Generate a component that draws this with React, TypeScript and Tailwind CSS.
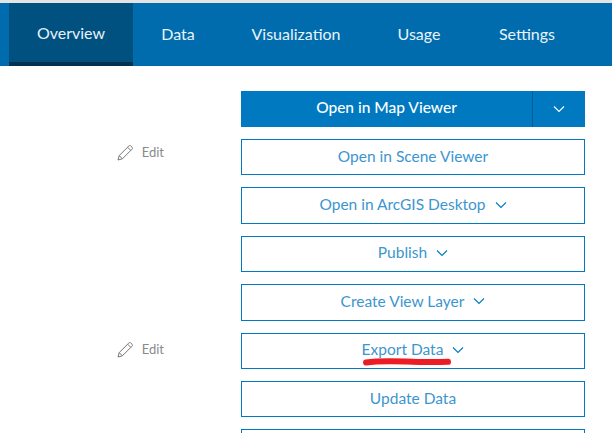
type Row = {
  label: string;
  chevron?: boolean;
  edit?: string;
};

const tabs = [
  { label: "Data", width: "w-[90px]" },
  { label: "Visualization", width: "w-[146px]" },
  { label: "Usage", width: "w-[100px]" },
  { label: "Settings", width: "w-[116px]" },
];

const rows: Row[] = [
  { label: "Open in Scene Viewer", edit: "pr-[77px] pb-[8px]" },
  { label: "Open in ArcGIS Desktop", chevron: true },
  { label: "Publish", chevron: true },
  { label: "Create View Layer", chevron: true },
  { label: "Export Data", chevron: true, edit: "pr-[77px] pb-[2px]" },
  { label: "Update Data" },
  { label: "" },
];

function Chevron({ className }: { className?: string }) {
  return (
    <svg viewBox="0 0 12 8" className={className} fill="none" stroke="currentColor" strokeWidth="1.1">
      <path d="M1 1.500 6 6.500l5-5" />
    </svg>
  );
}

function Pencil() {
  return (
    <svg viewBox="0 0 16 16" className="h-[16px] w-[16px] text-[#777777]" fill="none" stroke="currentColor" strokeWidth="1">
      <path d="M1 15l1.200-4.400L11.800 1c.6-.6 1.400-.6 2 0l1.200 1.200c.6.6.6 1.400 0 2l-9.600 9.600L1 15z" />
      <path d="M2.200 10.600l3.200 3.200M10.600 2.200l3.200 3.200" />
    </svg>
  );
}

export default function App() {
  return (
    <div className="h-[433px] w-[612px] overflow-hidden bg-white font-['Lato',sans-serif]">
      <div className="h-[3px] bg-[#e4e4e4]" />
      <nav className="flex h-[63px] bg-[#006cad] pl-[9px] text-[16px] text-[#e8f3fa]">
        <div className="flex w-[124px] items-center justify-center border-b-4 border-[#00324f] bg-[#005080] pt-[1px]">
          Overview
        </div>
        {tabs.map((tab) => (
          <div key={tab.label} className={`flex items-center justify-center pb-[1px] ${tab.width}`}>
            {tab.label}
          </div>
        ))}
      </nav>

      <div className="flex flex-col gap-[12px] pt-[25px]">
        <div className="flex">
          <div className="w-[241px]" />
          <div className="flex h-[36px] w-[344px] bg-[#0079c1] text-white">
            <div className="flex w-[291px] items-center justify-center pb-[3px] text-[15.500px] font-medium">
              Open in Map Viewer
            </div>
            <div className="flex w-[53px] items-center justify-center border-l border-[#005e95]">
              <Chevron className="h-[8px] w-[12px]" />
            </div>
          </div>
        </div>

        {rows.map((row, i) => (
          <div key={i} className="flex">
            <div className={`flex w-[241px] items-center justify-end ${row.edit ?? ""}`}>
              {row.edit && (
                <div className="flex items-center text-[13px] text-[#8a8a8a]">
                  <Pencil />
                  <span className="ml-[9px]">Edit</span>
                </div>
              )}
            </div>
            <div className="relative flex h-[36.400px] w-[344px] items-center justify-center gap-[9px] border border-[#0079c1] bg-white pb-[2px] text-[15.500px] text-[#3d95cf]">
              <span>{row.label}</span>
              {row.chevron && <Chevron className="h-[8px] w-[12px] text-[#0079c1]" />}
              {row.label === "Export Data" && (
                <svg viewBox="0 0 90 8" className="absolute left-[120px] top-[24px] h-[8px] w-[90px]" fill="none">
                  <path d="M4 4.500c10-1.500 24-1.500 40-1 12 .5 26 .8 42 .3" stroke="#ed1c24" strokeWidth="6" strokeLinecap="round" />
                </svg>
              )}
            </div>
          </div>
        ))}
      </div>
    </div>
  );
}
